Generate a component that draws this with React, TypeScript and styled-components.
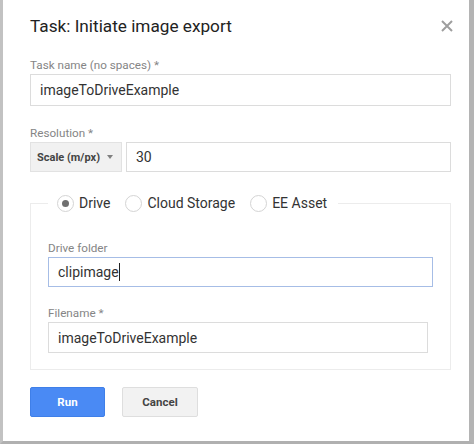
import React from "react";
import styled, { createGlobalStyle } from "styled-components";

const Global = createGlobalStyle`
  html, body { margin: 0; padding: 0; background: #ffffff; }
  body { font-family: Roboto, "Noto Sans", Arial, sans-serif; }
  * { box-sizing: border-box; }
`;

const Frame = styled.div`
  width: 474px;
  height: 444px;
  background: #ffffff;
  border-left: 3px solid #c2c2c2;
  border-right: 5px solid #b4b4b4;
  border-bottom: 3px solid #b0b0b0;
  padding: 15px 18px 0 27px;
  display: flex;
  flex-direction: column;
`;

const Header = styled.div`
  display: flex;
  align-items: center;
  justify-content: space-between;
  height: 22px;
`;

const Title = styled.h1`
  margin: 0;
  font-size: 17.2px;
  line-height: 22px;
  font-weight: 400;
  color: #222222;
`;

const Close = styled.button`
  border: 0;
  background: transparent;
  padding: 0;
  margin-right: -2px;
  width: 12px;
  height: 12px;
  display: flex;
  cursor: pointer;
`;

const Label = styled.label<{ $top: number }>`
  display: block;
  margin-top: ${(p) => p.$top}px;
  font-size: 11.7px;
  line-height: 16px;
  color: #858585;
`;

const TextInput = styled.div<{ $h: number; $focus?: boolean; $w?: string }>`
  margin-top: 1px;
  height: ${(p) => p.$h}px;
  width: ${(p) => p.$w ?? "100%"};
  border: 1px solid ${(p) => (p.$focus ? "#a6bde6" : "#dcdcdc")};
  display: flex;
  align-items: center;
  padding-left: 9px;
  font-size: 14px;
  color: #333333;
  background: #ffffff;
`;

const Caret = styled.span`
  display: inline-block;
  width: 1px;
  height: 18px;
  background: #222;
`;

const Row = styled.div`
  display: flex;
  gap: 4px;
  margin-top: 1px;
  height: 30px;
`;

const Select = styled.div`
  width: 92px;
  height: 30px;
  background: #f1f1f1;
  border: 1px solid #e2e2e2;
  display: flex;
  align-items: center;
  padding-left: 6px;
  gap: 7px;
  font-size: 11px;
  font-weight: 700;
  color: #444444;
`;

const Arrow = styled.span`
  width: 0;
  height: 0;
  border-left: 3.5px solid transparent;
  border-right: 3.5px solid transparent;
  border-top: 4px solid #808080;
`;

const ValueInput = styled.div`
  flex: 1;
  height: 30px;
  border: 1px solid #dcdcdc;
  display: flex;
  align-items: center;
  padding-left: 9px;
  font-size: 14px;
  color: #333333;
`;

const Fieldset = styled.fieldset`
  margin: 21px 0 0 0;
  border: 1px solid #ececec;
  padding: 0 17px 16px 17px;
  min-width: 0;
`;

const Legend = styled.legend`
  padding: 0 11px 0 9px;
  height: 20px;
  display: flex;
  align-items: center;
`;

const RadioItem = styled.span`
  display: inline-flex;
  align-items: center;
  gap: 5px;
  font-size: 14px;
  color: #333333;
  margin-right: 15px;
  &:last-child { margin-right: 0; }
`;

const Radio = styled.span<{ $on?: boolean }>`
  width: 17px;
  height: 17px;
  border-radius: 50%;
  border: 1px solid #d4d4d4;
  display: inline-flex;
  align-items: center;
  justify-content: center;
  &::after {
    content: "";
    width: 7px;
    height: 7px;
    border-radius: 50%;
    background: ${(p) => (p.$on ? "#707070" : "transparent")};
  }
`;

const Buttons = styled.div`
  display: flex;
  gap: 17px;
  margin-top: 17px;
`;

const Button = styled.button<{ $primary?: boolean }>`
  width: ${(p) => (p.$primary ? 75 : 76)}px;
  height: 30px;
  border-radius: 2px;
  border: 1px solid ${(p) => (p.$primary ? "#3f7fe8" : "#dedede")};
  background: ${(p) => (p.$primary ? "#4a8af4" : "#f2f2f2")};
  color: ${(p) => (p.$primary ? "#ffffff" : "#444444")};
  font-family: Roboto, Arial, sans-serif;
  font-size: 11.5px;
  font-weight: 700;
  padding: 0;
  cursor: pointer;
`;

export default function App() {
  return (
    <>
      <Global />
      <Frame>
        <Header>
          <Title>Task: Initiate image export</Title>
          <Close aria-label="Close">
            <svg width="12" height="12" viewBox="0 0 12 12">
              <path d="M1 1 L11 11 M11 1 L1 11" stroke="#9e9e9e" strokeWidth="2" />
            </svg>
          </Close>
        </Header>

        <Label $top={20}>Task name (no spaces) *</Label>
        <TextInput $h={32}>imageToDriveExample</TextInput>

        <Label $top={19}>Resolution *</Label>
        <Row>
          <Select>
            Scale (m/px)
            <Arrow />
          </Select>
          <ValueInput>30</ValueInput>
        </Row>

        <Fieldset>
          <Legend>
            <RadioItem>
              <Radio $on />
              Drive
            </RadioItem>
            <RadioItem>
              <Radio />
              Cloud Storage
            </RadioItem>
            <RadioItem>
              <Radio />
              EE Asset
            </RadioItem>
          </Legend>

          <Label $top={27}>Drive folder</Label>
          <TextInput $h={30} $focus>
            clipimage
            <Caret />
          </TextInput>

          <Label $top={18}>Filename *</Label>
          <TextInput $h={31} $w="380px">imageToDriveExample</TextInput>
        </Fieldset>

        <Buttons>
          <Button $primary>Run</Button>
          <Button>Cancel</Button>
        </Buttons>
      </Frame>
    </>
  );
}
